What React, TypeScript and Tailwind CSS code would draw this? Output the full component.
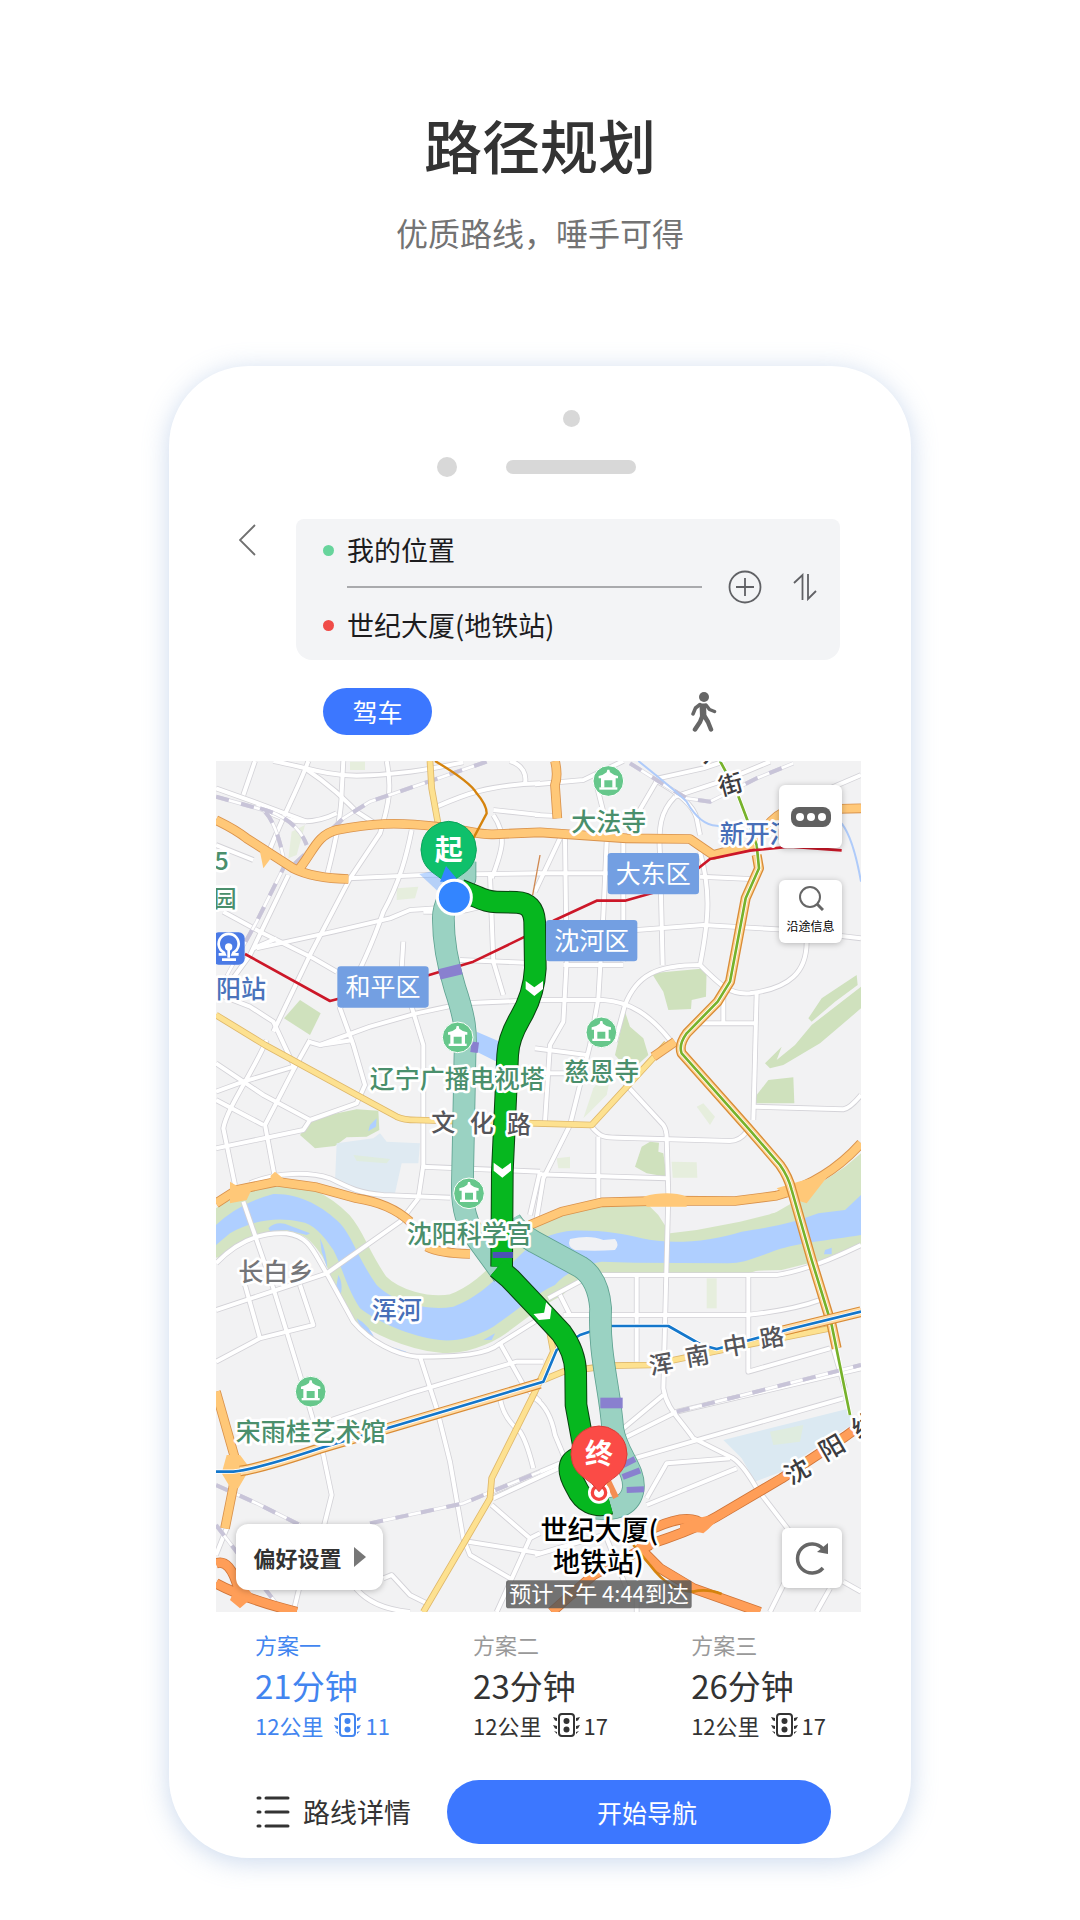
import type { ReactNode } from 'react'

// Map drawing uses 3 units per pixel
const streets = [
  'M135 18L100 120', 'M190 18C280 35 350 62 440 62C560 60 650 45 760 22', 'M295 18C270 90 210 200 175 295',
  'M400 18L395 110C395 160 385 230 350 365', 'M530 18C545 90 540 140 510 235L420 370L300 600L190 830',
  'M605 225C590 300 570 380 520 470C490 560 450 650 390 760L430 870L465 990L440 1045L300 1095L280 1125L18 1180',
  'M235 360L120 600L18 740', 'M18 100L130 140L290 200', 'M18 270L130 315', 'M140 150C220 205 300 215 380 175', 'M415 370L640 360L990 355',
  'M140 580L370 530L540 490L600 465L680 460', 'M40 470L150 530L310 610L380 650', 'M18 715L120 755L190 800L255 940',
  'M330 870L480 815L620 775L760 745L990 735', 'M580 560L575 640L600 740L640 870V1230L625 1330', 'M840 360L850 620L880 720',
  'M680 155C760 120 830 90 990 85', 'M285 40C360 90 400 130 440 170L510 215', 'M850 165L990 180', 'M850 180C890 240 880 280 845 370',
  'M900 18C940 30 950 60 945 85', 'M750 615L990 625', 'M130 580L200 550', 'M640 470C700 470 760 480 850 440',
  'M975 88L1120 75L1240 18', 'M1260 215L1345 70L1480 40L1540 20', 'M1335 75C1400 110 1450 150 1460 190L1470 240',
  'M1395 125C1350 170 1345 220 1350 300L1358 630', 'M1395 125L1560 70L1680 20', 'M1065 250L1070 620L1060 800L1020 870L1005 1100',
  'M1190 260L1180 480L1165 730L1140 870L1080 1110L1000 1270L980 1390', 'M1240 250V620', 'M975 355H1200M1470 365L1620 372',
  'M1470 290C1500 400 1500 480 1470 630', 'M1280 525L1480 510L1740 525L1953 550', 'M1060 630H1240',
  'M975 735L1180 735C1260 740 1320 780 1380 855', 'M1215 860L1245 750C1280 660 1340 630 1470 630C1530 690 1560 720 1620 715C1740 700 1790 650 1790 560',
  'M1640 715L1630 1095', 'M1540 700V805M1460 805H1640', 'M1790 130L1953 60', 'M975 180L1040 183', 'M1050 250L975 410', 'M1160 90L1180 170',
  'M1245 985L1360 1110Q1370 1125 1370 1150L1375 1320L1360 1900C1370 1960 1400 1980 1450 2050L1570 2110Q1600 2130 1640 2200L1740 2330L1760 2400',
  'M1145 1115C1170 1145 1180 1147 1220 1148L1560 1158Q1590 1158 1610 1130', 'M1165 1145V1330', 'M985 1258L1370 1270',
  'M975 880L1130 900', 'M975 955H1080', 'M1635 1055L1900 1063Q1920 1060 1953 1020', 'M1015 1630L1145 1560L1700 1560Q1800 1545 1953 1470',
  'M1280 1560V1820', 'M1615 1565V1850L1860 1780', 'M1060 1680L1610 1680Q1750 1665 1830 1635', 'M1050 1620L1080 1680',
  'M170 855C130 950 50 1060 40 1120L75 1290', 'M300 855L250 945L165 1110L195 1270', 'M18 925L100 980L160 1020L300 1095',
  'M18 1010L100 980L250 935', 'M18 1035L160 1110', 'M295 860L330 870L430 855', 'M100 1340L190 1600L270 1860L340 2100L365 2220L340 2320',
  'M18 1525C80 1460 150 1430 230 1435C300 1445 310 1490 350 1555L430 1700C480 1760 560 1800 620 1805C750 1805 830 1800 870 1765L990 1690',
  'M18 1665L350 1555L570 1400L625 1330', 'M105 1590L150 1750', 'M270 1590L310 1710L150 1750L18 1820',
  'M120 1285C200 1250 300 1250 360 1270C420 1300 450 1315 520 1320L720 1328', 'M635 1235L990 1250', 'M960 1380L990 1250',
  'M630 1805L680 1960L720 2120L760 2350L780 2400L900 2470', 'M365 1995L600 1915L920 1820L1000 1820', 'M870 1765L940 1890L990 1940',
  'M870 1930Q880 1990 930 2030Q950 2060 970 2140', 'M850 2210L1180 2070L1360 1920', 'M850 2230L1250 2045L1400 1970L1953 1840',
  'M845 2250L960 2350L860 2571', 'M775 2360L900 2380L990 2395', 'M960 2350L990 2335', 'M18 2400L50 2320', 'M270 2490L250 2571',
  'M430 2490Q480 2560 600 2571', 'M520 2470L545 2460L600 2520L650 2545', 'M1100 2160L1480 2050L1900 1930',
  'M1310 2230L1370 2125L1560 2110', 'M1310 2250L1580 2140', 'M1870 1780L1905 1900', 'M975 1930Q1020 1960 1035 2040L1060 2100',
  'M975 2400L1180 2340', 'M1280 2500V2571', 'M1740 2450L1680 2571', 'M1860 2500L1820 2571', 'M1900 2480L1953 2510', 'M1190 2350L1250 2500',
]

const railways = [
  'M18 125L160 165Q200 200 225 330L140 500L18 720', 'M830 20L480 140L400 190L250 330', 'M150 160Q260 190 290 270',
  'M1260 25L1380 100L1430 130L1500 140L1640 70L1750 25', 'M18 2190L140 2245L270 2310', 'M480 2305L760 2245L990 2150',
  'M1400 1970L1600 1920L1953 1830', 'M18 2310L210 2560',
]

const yellowRoads = [
  'M660 18L665 100L685 210', 'M18 780L165 870L440 1020L560 1085Q580 1095 620 1095L1145 1110L1370 865',
  'M1015 1710L1030 1790L975 1910L845 2170L840 2230L770 2350L640 2571', 'M975 1885L1060 1850L1200 1832L1320 1830L1560 1780L1860 1720',
]

const orangeRoads = [
  'M18 195Q80 225 110 250L250 340Q310 370 415 372', 'M265 345C310 290 320 240 380 225C480 205 560 200 680 215C780 225 800 240 850 238L990 232L1250 250L1440 252Q1480 280 1510 300L1640 265Q1680 180 1740 165L1953 160',
  'M1035 18Q1045 60 1035 90L1042 190', 'M18 1345L80 1305L200 1280L320 1297L440 1330Q540 1345 600 1400', 'M650 1475Q690 1495 780 1497',
  'M960 1410L1055 1370L1175 1342L1375 1337L1575 1338L1700 1322Q1850 1280 1953 1165', 'M18 1910L75 2110L75 2170L45 2320', 'M1330 905L1395 860',
]

const highways = [
  'M1953 2010L1905 2045L1715 2170L1520 2285Q1440 2330 1310 2370', 'M1330 2320Q1440 2270 1480 2310', 'M1280 2370L1350 2440L1450 2500L1650 2571',
  'M1320 2370L1150 2460L1025 2571', 'M18 2425Q60 2410 85 2500', 'M18 2485Q100 2530 260 2571',
]

const greenLine = 'M1530 18L1580 110L1610 190L1640 270L1647 340L1607 430L1560 680L1523 740L1430 835Q1405 870 1415 895L1615 1120L1710 1230Q1735 1265 1745 1305L1805 1515L1865 1710L1920 1980'
const greenCorridor = 'M1640 300L1647 340L1607 430L1560 680L1523 740L1430 835Q1405 870 1415 895L1615 1120L1710 1230Q1735 1265 1745 1305L1805 1515L1865 1710L1880 1780'
const blueLine = 'M18 2150L70 2150Q150 2140 330 2080L1000 1880L1040 1785L1110 1740L1190 1713L1375 1713L1475 1770L1520 1782L1740 1722L1953 1670'
const blueCorridor = ['M90 2148Q150 2140 330 2080L990 1885', 'M1720 1727L1953 1670']

const river =
  'M18 1410C60 1370 120 1335 190 1317C270 1315 340 1355 390 1405C430 1450 440 1505 500 1590C550 1640 650 1670 730 1655C810 1625 860 1570 910 1520C960 1470 1000 1435 1085 1427C1180 1425 1230 1435 1295 1450C1380 1470 1500 1460 1595 1430C1700 1415 1760 1400 1825 1375L1905 1365L1953 1320V1440C1860 1455 1760 1465 1700 1485C1620 1515 1600 1523 1555 1525L1275 1523L1175 1520C1110 1530 1060 1560 1035 1590C970 1620 930 1660 850 1715C790 1750 730 1760 690 1755C600 1745 500 1700 450 1660C410 1600 395 1530 370 1485C340 1440 310 1405 270 1400C200 1385 130 1395 60 1435L18 1470Z'

const parks = [
  'M270 735L332 775L300 840L222 790Z', 'M440 1063L505 1067L508 1125L470 1145L410 1147L375 1173L315 1180L270 1140L300 1100L370 1077Z',
  'M1325 655L1490 640L1488 725L1445 735L1443 762L1375 765L1360 710Z', 'M1795 790L1835 730L1940 660L1943 690L1875 740L1805 800Z',
  'M1755 870L1805 810L1953 695V760L1830 865L1720 930L1680 940L1665 925L1715 875L1700 915Z', 'M1640 1020L1675 975L1750 967L1753 1045L1635 1045Z',
  'M1295 1175L1320 1160L1347 1163L1345 1190L1360 1195L1370 1265L1310 1255L1275 1235Z', 'M1245 770L1260 815L1300 850L1315 900L1260 950L1215 900Z',
]
const faintParks = ['M1385 1220L1460 1222L1462 1268L1388 1268Z', 'M1460 1055L1480 1045L1515 1085L1500 1110Z', 'M245 230L285 210L260 300L235 310Z', 'M420 20H465V45H420Z', 'M1490 1570H1520V1660H1490Z', 'M560 400L625 395L615 430L560 435Z', 'M1040 1210L1080 1205V1240H1045Z', 'M1150 1000L1210 920L1190 1020L1120 1090Z']

const routeMain = 'M750 405L800 425Q830 440 860 441L920 442Q970 443 974 500L976 640Q972 720 930 790Q895 850 893 900L877 1250L875 1535'
const routeSouth = 'M862 1538L900 1570L990 1665L1055 1735Q1095 1790 1097 1850L1098 1950L1120 2070'

function Roads({ paths, color, casing, width }: { paths: string[]; color: string; casing: string; width: number }) {
  return (
    <g fill="none" strokeLinejoin="round">
      {paths.map((d) => <path key={d} d={d} stroke={casing} strokeWidth={width + 5} />)}
      {paths.map((d) => <path key={d} d={d} stroke={color} strokeWidth={width} />)}
    </g>
  )
}

interface LabelProps {
  x: number
  y: number
  size?: number
  color: string
  rotate?: number
  weight?: number
  halo?: boolean
  children: ReactNode
}

function Label({ x, y, size = 75, color, rotate = 0, weight = 500, halo = true, children }: LabelProps) {
  return (
    <text
      x={x}
      y={y + size * 0.37}
      fontSize={size}
      fontWeight={weight}
      fill={color}
      textAnchor="middle"
      transform={rotate ? `rotate(${rotate} ${x} ${y})` : undefined}
      stroke={halo ? '#fff' : 'none'}
      strokeWidth={16}
      strokeLinejoin="round"
      paintOrder="stroke"
    >
      {children}
    </text>
  )
}

function District({ x, y, name }: { x: number; y: number; name: string }) {
  return (
    <g>
      <rect x={x} y={y} width="274" height="124" rx="10" fill="#739fe2" />
      <Label x={x + 137} y={y + 62} weight={400} color="#fff" halo={false}>{name}</Label>
    </g>
  )
}

function Poi({ x, y }: { x: number; y: number }) {
  return (
    <g transform={`translate(${x} ${y})`}>
      <circle r="46" fill="#66c78b" stroke="#fff" strokeWidth="3" />
      <path d="M-3 -34H3L5 -26Q14 -18 29 -15V-8H-29V-15Q-14 -18 -5 -26Z" fill="#fff" />
      <path d="M-22 -10H22V20H-22ZM-12 -2V20H12V-2Z" fill="#fff" fillRule="evenodd" />
      <path d="M-27 19H27V26H-27Z" fill="#fff" />
    </g>
  )
}

function RouteMap() {
  return (
    <svg viewBox="18 18 1935 2553" className="block h-auto w-full" role="img" aria-label="路线地图">
      <rect x="18" y="18" width="1935" height="2553" fill="#f2f2f3" />

      {/* Parks and water */}
      <g fill="#e6eedd">{faintParks.map((d) => <path key={d} d={d} />)}</g>
      <g fill="#cfe1bd">{parks.map((d) => <path key={d} d={d} />)}</g>
      <path d="M380 1165L490 1150L510 1135L530 1160L630 1165L625 1225H575L555 1315L440 1310L375 1280Z" fill="#dfeaf2" />
      <path d="M1540 2055L1920 1960L1925 2010L1815 2080L1715 2150L1635 2180L1595 2110Z" fill="#dbe9f2" />
      <path d="M430 1200L540 1212L530 1225L440 1218ZM1680 2030L1780 2010L1770 2060L1690 2070Z" fill="#dfecdf" />
      <path d={river} fill="#d4e4c3" stroke="#d4e4c3" strokeWidth="76" strokeLinejoin="round" />
      <path d="M975 1415L1075 1375L1175 1350H1315L1345 1380L1380 1435L1455 1430L1535 1410L1675 1385L1745 1345L1815 1295L1905 1235L1953 1195V1465L1835 1515L1715 1545L1375 1555H1135L1035 1615L995 1635Z" fill="#d4e4c3" />
      <path d={river} fill="#afcfff" />
      <path d="M1080 1452Q1140 1438 1180 1455L1215 1452Q1230 1470 1215 1485Q1150 1490 1095 1485Q1070 1475 1080 1452Z" fill="#f0f1f4" />
      <path d="M1345 1360H1700L1680 1378L1590 1400L1460 1425L1380 1435Z" fill="#f1f1f3" />
      <path d="M175 1420Q200 1395 240 1412L300 1435L290 1440L230 1425L180 1428ZM330 1450Q350 1490 352 1540L335 1490ZM385 1560Q400 1585 392 1620L378 1600ZM440 1690Q480 1710 500 1765L455 1725ZM510 1765L590 1790L575 1795ZM820 1755L855 1735L845 1755ZM1845 1485L1865 1478V1498H1842ZM480 1110L500 1090L498 1115L475 1128ZM800 830L870 860L860 920L800 890Z" fill="#afcfff" />

      <Roads paths={streets} color="#fff" casing="#d3d2d7" width={12} />
      <g fill="none">
        {railways.map((d) => <path key={d} d={d} stroke="#d9d8df" strokeWidth="12" />)}
        {railways.map((d) => <path key={d} d={d} stroke="#fff" strokeWidth="8" />)}
        {railways.map((d) => <path key={d} d={d} stroke="#c8c4d8" strokeWidth="12" strokeDasharray="40 38" />)}
        <path d="M1285 18Q1400 110 1430 140Q1470 210 1520 212L1600 225M1895 205Q1930 250 1953 380" stroke="#afcbfa" strokeWidth="6" />
      </g>
      <Roads paths={yellowRoads} color="#fde190" casing="#dfb86b" width={15} />
      <Roads paths={orangeRoads} color="#ffc878" casing="#d9924c" width={24} />
      <path d="M60 1280L85 1295L130 1292L110 1335L60 1345ZM182 1262L195 1250L210 1262L240 1290H180ZM150 290Q175 265 190 300L160 340ZM1300 1325Q1375 1305 1430 1325V1355H1310ZM1700 1300L1765 1280L1860 1255L1790 1345L1740 1330ZM50 2100H90L120 2140L85 2200H62L35 2155Z" fill="#ffc878" />
      <Roads paths={highways} color="#ff9e58" casing="#cf7438" width={26} />
      <path d="M1410 2310Q1480 2275 1530 2285Q1500 2320 1480 2335Q1450 2325 1410 2345ZM85 2480Q120 2500 130 2525L90 2560L60 2535Z" fill="#ff9e58" />

      {/* Metro lines */}
      <g fill="none" strokeLinejoin="round">
        <path d={greenCorridor} stroke="#d98b35" strokeWidth="30" />
        <path d={greenCorridor} stroke="#ffd595" strokeWidth="22" />
        <path d={greenLine} stroke="#fff" strokeWidth="13" />
        <path d={greenLine} stroke="#77b22b" strokeWidth="8" />
        {blueCorridor.map((d) => <path key={d} d={d} stroke="#d98b35" strokeWidth="32" />)}
        {blueCorridor.map((d) => <path key={d} d={d} stroke="#ffdca6" strokeWidth="25" />)}
        <path d={blueLine} stroke="#fff" strokeWidth="13" />
        <path d={blueLine} stroke="#1477cb" strokeWidth="8" />
        <path d="M105 597L360 738L640 665L790 620L945 545L1035 495L1160 437H1245L1340 410L1465 340L1500 312L1620 287L1740 275L1895 286" stroke="#cc1728" strokeWidth="8" />
        <path d="M675 18Q780 80 800 115Q830 150 830 175L790 250" stroke="#d5830d" strokeWidth="7" />
        <path d="M1270 2370L1320 2430Q1380 2510 1450 2510Q1490 2500 1535 2517" stroke="#d5830d" strokeWidth="8" />
        <path d="M990 300L968 420" stroke="#d0884f" strokeWidth="4" />
      </g>

      {/* Alternative route */}
      <g fill="none" strokeLinejoin="round">
        {['#5fa291', '#9ad2c2'].map((color, i) => (
          <g key={color} stroke={color} strokeWidth={i ? 63 : 68}>
            <path d="M765 320V370Q700 430 700 490C700 560 710 620 735 700C765 790 770 830 765 900L757 1300Q757 1390 800 1450L880 1560" />
            <path d="M900 1395Q920 1430 975 1462L1110 1535Q1165 1570 1172 1660C1165 1800 1200 1900 1208 2020C1220 2100 1275 2140 1270 2200Q1260 2270 1160 2260" />
          </g>
        ))}
        <g stroke="#8980cf" strokeWidth="32">
          <path d="M688 658L754 642" />
          <path d="M1171 1944H1238" />
          <path d="M1230 2135L1275 2112M1238 2166L1290 2146M1250 2205L1302 2203" strokeWidth="18" />
          <path d="M783 875L805 878" />
        </g>
      </g>

      {/* Selected route */}
      <g fill="none" strokeLinejoin="round">
        {['#09420f', '#06b71f'].map((color, i) => (
          <g key={color} stroke={color} strokeWidth={i ? 62 : 68}>
            <path d={routeMain} />
            <path d={routeSouth} />
            <path d="M1100 2110Q1060 2130 1098 2195Q1130 2265 1200 2245" />
          </g>
        ))}
        <path d="M848 1500H909" stroke="#4c52b5" strokeWidth="18" />
      </g>
      {[[973, 698, 0], [877, 1243, 0], [1003, 1674, -43]].map(([x, y, r]) => (
        <path key={y} transform={`translate(${x} ${y}) rotate(${r})`} d="M-26 -20L0 -1L26 -20V4L0 25L-26 4Z" fill="#fff" />
      ))}

      <Label x={35} y={318} color="#4a8f6c">5</Label>
      <Label x={45} y={430} color="#4a8f6c" size={69}>园</Label>
      <rect x="8" y="532" width="96" height="97" rx="18" fill="#4a7ae6" />
      <path d="M26 598H44L42 593A30 30 0 1 1 70 593L68 598H86M56 580V608M36 614H78" fill="none" stroke="#fff" strokeWidth="8" />
      <circle cx="56" cy="576" r="11" fill="#fff" />
      <Label x={93} y={700} color="#4a73bb">阳站</Label>

      <Poi x={1195} y={78} />
      <Poi x={743} y={847} />
      <Poi x={1174} y={832} />
      <Poi x={777} y={1315} />
      <Poi x={302} y={1910} />
      <Label x={1196} y={200} color="#4a8f6c">大法寺</Label>
      <Label x={742} y={970} color="#4a8f6c">辽宁广播电视塔</Label>
      <Label x={1175} y={950} color="#4a8f6c">慈恩寺</Label>
      <Label x={778} y={1435} color="#4a8f6c">沈阳科学宫</Label>
      <Label x={302} y={2029} color="#4a8f6c">宋雨桂艺术馆</Label>
      <Label x={197} y={1549} color="#757679">长白乡</Label>
      <Label x={560} y={1664} color="#486fb8">浑河</Label>
      <Label x={1642} y={236} color="#486fb8">新开河</Label>

      <Label x={700} y={1101} size={72} color="#55555a">文</Label>
      <Label x={815} y={1103} size={72} color="#55555a">化</Label>
      <Label x={927} y={1107} size={72} color="#55555a">路</Label>
      <Label x={1505} y={-10} size={72} color="#3c3c40" rotate={-15}>大</Label>
      <Label x={1562} y={88} size={72} color="#3c3c40" rotate={-15}>街</Label>
      <Label x={1353} y={1827} size={72} color="#55555a" rotate={-10}>浑</Label>
      <Label x={1462} y={1802} size={72} color="#55555a" rotate={-10}>南</Label>
      <Label x={1575} y={1771} size={72} color="#55555a" rotate={-10}>中</Label>
      <Label x={1685} y={1747} size={72} color="#55555a" rotate={-10}>路</Label>
      <Label x={1762} y={2148} size={75} color="#3c3c40" rotate={-30}>沈</Label>
      <Label x={1865} y={2077} size={75} color="#3c3c40" rotate={-30}>阳</Label>
      <Label x={1963} y={2010} size={75} color="#3c3c40" rotate={-30}>线</Label>

      <District x={382} y={634} name="和平区" />
      <District x={1193} y={294} name="大东区" />
      <District x={1008} y={495} name="沈河区" />

      {/* Start marker */}
      <path d="M628 357L710 340L690 415Z" fill="#6ba6ff" opacity=".45" />
      <path d="M716 199A85 85 0 0 1 765 352Q735 370 716 395Q697 370 667 352A85 85 0 0 1 716 199Z" fill="#0fc06b" stroke="#0ba35c" strokeWidth="3" />
      <Label x={716} y={284} size={84} weight={700} color="#fff" halo={false}>起</Label>
      <path d="M708 333L748 380H690Z" fill="#3385ff" />
      <circle cx="733" cy="427" r="51" fill="#3385ff" stroke="#fff" strokeWidth="9" />

      {/* End marker */}
      <path d="M1195 2180L1218 2228" stroke="#f48d52" strokeWidth="18" />
      <circle cx="1167" cy="2213" r="24" fill="#fff" stroke="#fff" strokeWidth="18" />
      <circle cx="1167" cy="2213" r="20" fill="#fff" stroke="#f5433e" strokeWidth="10" />
      <path d="M1167 2013A84 84 0 0 1 1215 2166Q1187 2183 1167 2210Q1147 2183 1119 2166A84 84 0 0 1 1167 2013Z" fill="#fb4b46" stroke="#d93c38" strokeWidth="3" />
      <Label x={1167} y={2097} size={84} weight={700} color="#fff" halo={false}>终</Label>

      <rect x="888" y="2476" width="557" height="84" rx="8" fill="#555" opacity=".82" />
      <Label x={1167} y={2516} size={66} weight={400} color="#fff" halo={false}>预计下午 4:44到达</Label>
      <Label x={1168} y={2326} size={81} color="#000">
        <tspan>世纪大厦(</tspan>
        <tspan x={1165} dy={95}>地铁站)</tspan>
      </Label>
    </svg>
  )
}

function TrafficLight() {
  return (
    <svg viewBox="0 0 27 26" className="h-[26px] w-[27px]" fill="none" stroke="currentColor" strokeWidth="2">
      <rect x="6" y="2" width="15" height="22" rx="3" />
      <g fill="currentColor" stroke="none">
        <circle cx="13.500" cy="9" r="3" />
        <circle cx="13.500" cy="17.500" r="3" />
        <path d="M0 5L4 6V9L2 8.500ZM0 13L4 14V17L2 16.500ZM1 19L4 20V22ZM27 5L23 6V9L25 8.500ZM27 13L23 14V17L25 16.500ZM26 19L23 20V22Z" />
      </g>
    </svg>
  )
}

const plans = [
  { name: '方案一', time: '21分钟', distance: '12公里', lights: 11 },
  { name: '方案二', time: '23分钟', distance: '12公里', lights: 17 },
  { name: '方案三', time: '26分钟', distance: '12公里', lights: 17 },
]

const card = 'flex items-center justify-center bg-white shadow-[0_1px_6px_rgba(0,0,0,0.25)]'

export default function App() {
  return (
    <main className="min-h-screen bg-white pt-[104px] pb-[62px] font-['Noto_Sans_CJK_SC',sans-serif] text-[#333]">
      <header className="text-center">
        <h1 className="text-[58px] leading-[80px] font-medium">路径规划</h1>
        <p className="mt-6 text-[32px] leading-[48px] text-[#737373]">优质路线，唾手可得</p>
      </header>

      <section className="mx-auto mt-[110px] w-full max-w-[742px] rounded-[80px] bg-white pt-[44px] pr-[50px] pb-[14px] pl-[47px] shadow-[0_4px_26px_rgba(140,170,215,0.45)]">
        {/* Camera, sensor and speaker */}
        <div className="flex items-end justify-center gap-[49px] pr-1">
          <span className="size-5 rounded-full bg-[#d8d8d8]" />
          <div className="flex flex-col items-center gap-[33px] pb-[3px]">
            <span className="size-[17px] rounded-full bg-[#d8d8d8]" />
            <span className="h-[14px] w-[130px] rounded-full bg-[#d8d8d8]" />
          </div>
        </div>

        <div className="mt-[42px] flex items-start gap-10 pr-[21px] pl-[23px]">
          <button aria-label="返回" className="mt-[5px]">
            <svg viewBox="0 0 17 32" className="h-8 w-[17px]" fill="none" stroke="#707070" strokeWidth="1.800">
              <path d="M16 1L1 16L16 31" />
            </svg>
          </button>
          <form className="flex min-w-0 flex-1 items-center rounded-t-lg rounded-b-2xl bg-[#f3f4f6] pr-[23px] pb-[6px] pl-[27px]">
            <div className="grid min-w-0 flex-1 grid-cols-[11px_1fr] items-center gap-x-[13px] pt-[11px] pb-[9px]">
              <span className="size-[11px] rounded-full bg-[#67d49c]" />
              <input aria-label="起点" defaultValue="我的位置" className="h-10 w-full min-w-0 text-[27px] text-[#1c1c1e] outline-none" />
              <hr className="col-start-2 mt-4 mb-[17px] border-t-2 border-[#a9aaad]" />
              <span className="size-[11px] rounded-full bg-[#f04c48] col-start-1" />
              <input aria-label="终点" defaultValue="世纪大厦(地铁站)" className="h-10 w-full min-w-0 text-[27px] text-[#1c1c1e] outline-none" />
            </div>
            <button type="button" aria-label="添加途经点" className="ml-[26px]">
              <svg viewBox="0 0 34 34" className="size-[34px]" fill="none" stroke="#606165" strokeWidth="1.800">
                <circle cx="17" cy="17" r="15.500" />
                <path d="M8 17H26M17 8V26" />
              </svg>
            </button>
            <button type="button" aria-label="交换起终点" className="ml-[31px]">
              <svg viewBox="0 0 24 28" className="h-7 w-6" fill="none" stroke="#606165" strokeWidth="1.800">
                <path d="M1 10L9.500 2V27M15 1V26L23 18" />
              </svg>
            </button>
          </form>
        </div>

        <nav className="mt-[28px] flex items-center justify-between pr-[144px] pl-[107px]">
          <button className="h-[47px] w-[109px] rounded-full bg-[#3c77ff] text-[25px] leading-none text-white">驾车</button>
          <button aria-label="步行">
            <svg viewBox="0 0 26 40" className="h-10 w-[26px]" fill="none" stroke="#666" strokeLinecap="round" strokeLinejoin="round">
              <circle cx="13" cy="5" r="5" fill="#666" stroke="none" />
              <path d="M10 13H13.500L14 25H10.500Z" fill="#666" strokeWidth="3" />
              <path d="M9 12.500L4.500 16L2 22M15 13L18.500 17.500L23.500 19.500" strokeWidth="3.500" />
              <path d="M11 25L9 30L4 37.500M14 25L17 30L20 37.500" strokeWidth="4.500" />
            </svg>
          </button>
        </nav>

        <div className="relative mt-[26px]">
          <RouteMap />
          <div className="absolute top-6 right-[19px] flex flex-col gap-8">
            <button aria-label="更多" className={`${card} size-[63px] rounded-md`}>
              <svg viewBox="0 0 40 20" className="h-5 w-10">
                <rect width="40" height="20" rx="8" fill="#606060" />
                <g fill="#fff">
                  <circle cx="9" cy="10" r="4" />
                  <circle cx="20" cy="10" r="4" />
                  <circle cx="31" cy="10" r="4" />
                </g>
              </svg>
            </button>
            <button className={`${card} size-[63px] flex-col rounded-md pb-[3px] text-[12px] leading-[18px] text-black`}>
              <svg viewBox="0 0 26 26" className="mb-[6px] size-[26px]" fill="none" stroke="#666" strokeWidth="2">
                <circle cx="12" cy="12" r="10" />
                <path d="M19 19L25 25" strokeWidth="3" />
              </svg>
              沿途信息
            </button>
          </div>
          <button className={`${card} absolute bottom-[22px] left-5 h-[66px] w-[147px] gap-3 rounded-xl text-[22px] leading-none font-bold`}>
            偏好设置
            <svg viewBox="0 0 12 20" className="h-5 w-3">
              <path d="M0 0L12 10L0 20Z" fill="#777" />
            </svg>
          </button>
          <button aria-label="刷新" className={`${card} absolute right-[19px] bottom-6 size-[60px] rounded-md`}>
            <svg viewBox="0 0 34 34" className="size-[34px]" fill="none" stroke="#666" strokeWidth="3.500">
              <path d="M28 27A14.500 14.500 0 1 1 28 8" />
              <path d="M33 2V13L22 11Z" fill="#666" stroke="none" />
            </svg>
          </button>
        </div>

        <div className="flex justify-between pt-[17px] pr-[35px] pl-[39px]">
          {plans.map((plan, i) => (
            <button key={plan.name} className={`text-left ${i === 0 ? 'text-[#4285f0]' : 'text-[#333]'}`}>
              <span className={`block text-[22px] leading-[30px] ${i === 0 ? '' : 'text-[#999]'}`}>{plan.name}</span>
              <span className="mt-1 block text-[33px] leading-[44px]">{plan.time}</span>
              <span className="mt-[3px] flex items-center text-[22px] leading-[30px]">
                {plan.distance}
                <span className="mr-1 ml-[11px]"><TrafficLight /></span>
                {plan.lights}
              </span>
            </button>
          ))}
        </div>

        <div className="mt-10 flex items-center pr-[30px] pl-10">
          <button className="mr-9 flex items-center gap-[13px] text-[27px] leading-10">
            <svg viewBox="0 0 34 32" className="h-8 w-[34px]" stroke="#333" strokeWidth="3" strokeLinecap="round">
              <path d="M2 2H4M10 2H32M2 16H4M10 16H32M2 30H4M10 30H32" />
            </svg>
            路线详情
          </button>
          <button className="h-16 flex-1 rounded-full bg-[#3c77ff] pl-4 text-[25px] leading-none text-white">开始导航</button>
        </div>
      </section>
    </main>
  )
}
